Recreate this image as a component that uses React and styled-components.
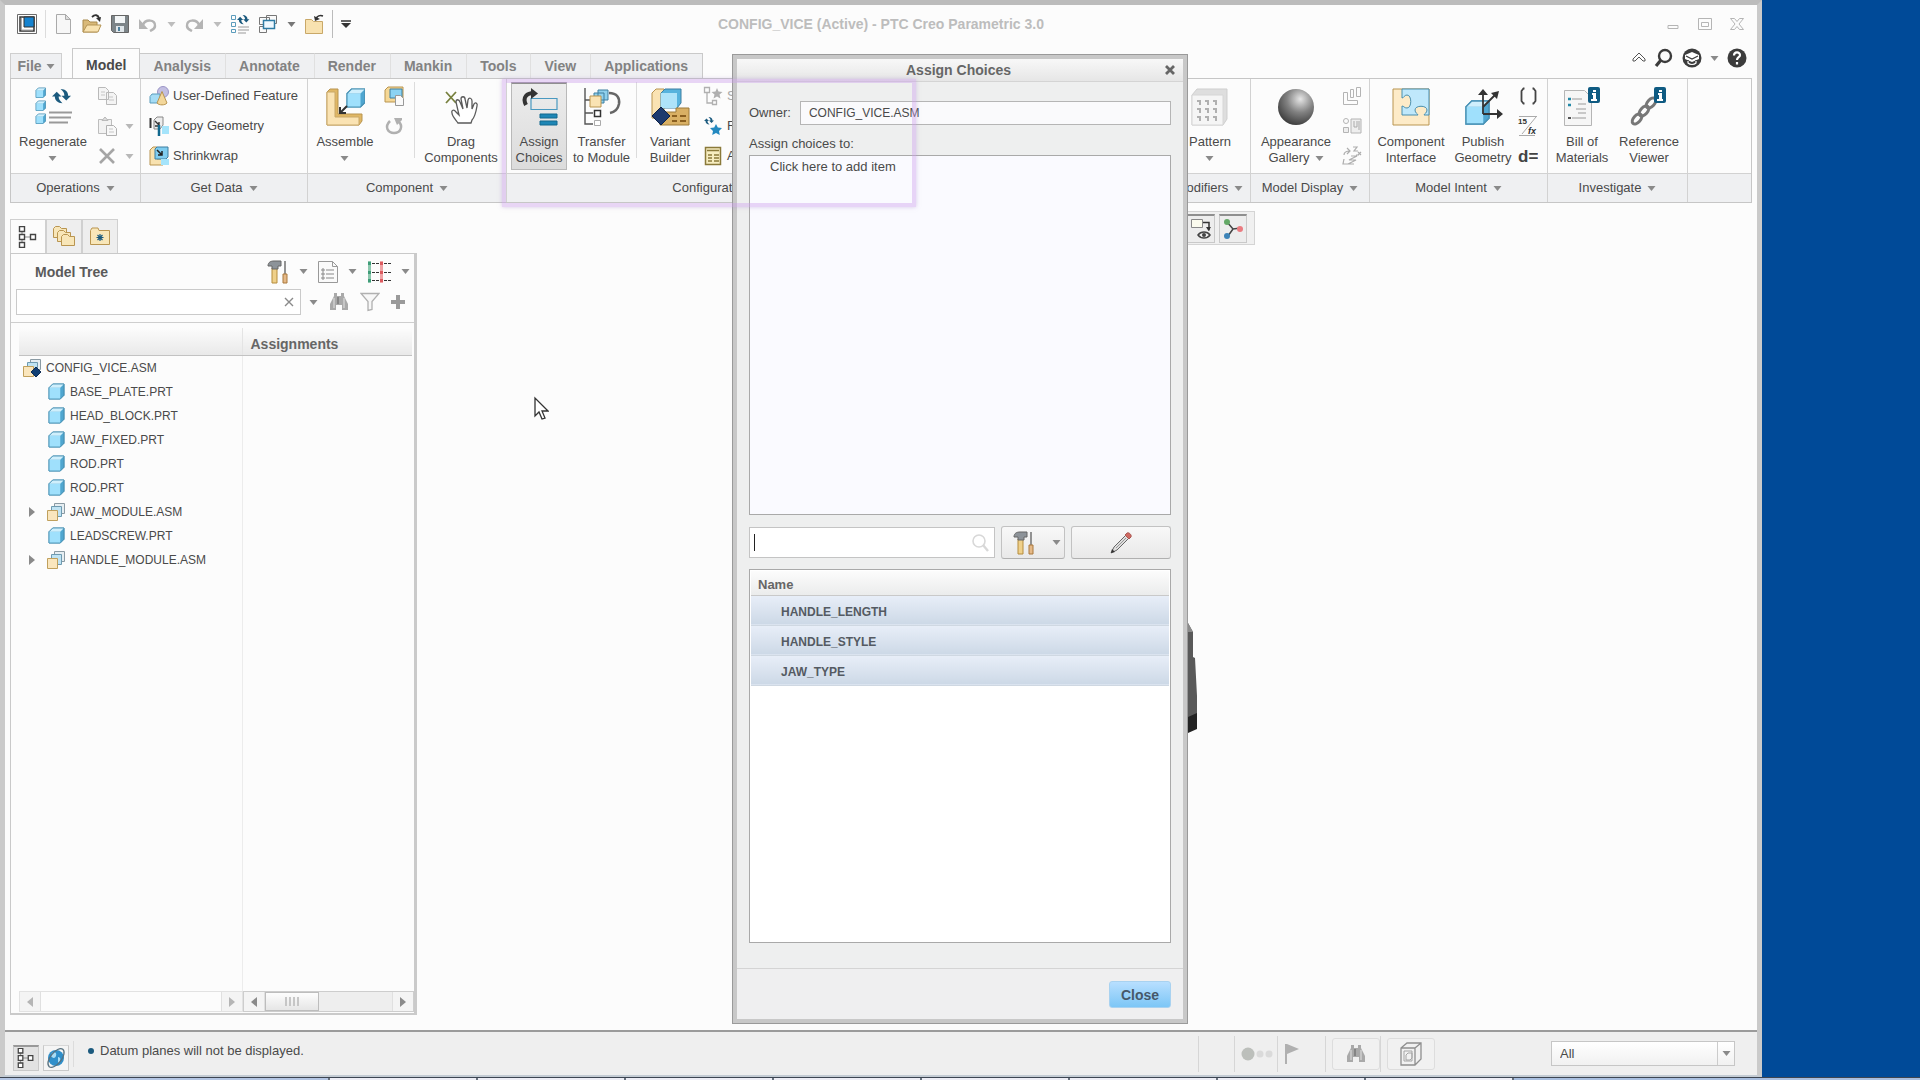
import React from "react";
import styled, { createGlobalStyle } from "styled-components";

const GlobalStyle = createGlobalStyle`
  * {
    box-sizing: border-box;
  }
  body {
    margin: 0;
    background-color: #004a98;
  }
  body, button, input, select, table {
    font-family: "Liberation Sans", Arial, sans-serif;
    font-size: 13px;
    line-height: 16px;
    color: #4a4a4a;
  }
  button {
    padding: 0;
    border: none;
    background: none;
  }
  svg {
    display: block;
    flex: none;
  }
`;

/* ---------- shell ---------- */

const Screen = styled.div`
  min-height: 100vh;
  display: flex;
  flex-direction: column;
  overflow: hidden;
`;

const Desktop = styled.div`
  flex: 1;
  display: flex;
  padding-right: 158px;
  background-color: #004a98;
`;

const Taskbar = styled.footer`
  height: 3px;
  display: flex;
  background-color: #a9bfe0;
  border-top: 1px solid #3d4552;
`;

const TaskSlot = styled.div`
  width: ${({ $wide }) => ($wide ? 330 : 148)}px;
  background-color: ${({ $wide }) => ($wide ? "#b4c6e4" : "#eeeef6")};
  border-right: 2px solid #66707c;
`;

const Window = styled.div`
  position: relative;
  flex: 1;
  min-width: 0;
  display: flex;
  flex-direction: column;
  border: 5px solid #cacaca;
  border-top-color: #bcbcbc;
  border-bottom: 2px solid #c4ccd4;
  background-color: #fcfcfc;
`;

const TitleBar = styled.header`
  height: 38px;
  display: grid;
  grid-template-columns: 1fr auto 1fr;
  align-items: center;
`;

const QuickAccess = styled.div`
  display: flex;
  align-items: center;
  gap: 8px;
  padding-left: 12px;
`;

const IconButton = styled.button`
  min-width: ${({ $narrow }) => ($narrow ? 10 : 20)}px;
  height: 20px;
  display: flex;
  align-items: center;
  justify-content: center;
`;

const Separator = styled.span`
  flex: none;
  width: 1px;
  height: ${({ $height }) => $height || 28}px;
  background-color: ${({ $color }) => $color || "#dcdcdc"};
`;

const WindowTitle = styled.h1`
  margin: 0;
  font-size: 14px;
  font-weight: bold;
  color: #bdbdbd;
`;

const WindowControls = styled.div`
  display: flex;
  justify-content: flex-end;
  gap: 12px;
  padding-right: 10px;
`;

/* ---------- ribbon ---------- */

const TabRow = styled.nav`
  height: 35px;
  display: flex;
  align-items: flex-end;
  padding: 0 5px;
`;

const FileTab = styled.button`
  width: 52px;
  height: 25px;
  margin-right: 10px;
  display: flex;
  align-items: center;
  justify-content: center;
  gap: 4px;
  border: 1px solid #cfcfcf;
  border-bottom: none;
  background-color: #eff0f2;
  font-size: 14px;
  font-weight: bold;
  color: #828282;
`;

const RibbonTab = styled.button`
  height: ${({ $active }) => ($active ? 30 : 25)}px;
  padding: ${({ $active }) => ($active ? "3px 13px 0" : "0 14px 0 13px")};
  border: 1px solid #c9c9c9;
  border-bottom: none;
  border-width: ${({ $active }) => ($active ? "1px 1px 0" : "1px 1px 0 0")};
  border-right-color: ${({ $active, $last }) => ($active || $last ? "#c9c9c9" : "#e0e0e0")};
  background-color: ${({ $active }) => ($active ? "#fcfcfc" : "#eff0f2")};
  font-size: 14px;
  font-weight: bold;
  color: ${({ $active }) => ($active ? "#4a4a4a" : "#828282")};
`;

const HelpTools = styled.div`
  height: 40px;
  margin-left: auto;
  display: flex;
  align-items: center;
  gap: 8px;
  padding-right: 5px;
`;

const Ribbon = styled.section`
  height: 125px;
  margin: 0 5px;
  display: flex;
  border: 1px solid #c6c6c6;
`;

const Group = styled.div`
  flex: ${({ $width }) => ($width ? `0 0 ${$width}px` : "1 1 0")};
  min-width: 0;
  display: flex;
  flex-direction: column;
  border-right: 1px solid #d2d2d2;
  &:last-child {
    border-right: none;
  }
`;

const GroupBody = styled.div`
  flex: 1;
  display: flex;
  align-items: flex-start;
  padding: 3px 4px 0 ${({ $indent }) => $indent || 4}px;
  gap: ${({ $gap }) => $gap || 0}px;
`;

const GroupLabel = styled.button`
  height: 29px;
  display: flex;
  align-items: center;
  justify-content: center;
  gap: 6px;
  padding-left: ${({ $shift }) => $shift || 0}px;
  border-top: 1px solid #d2d2d2;
  background-color: #eff0f2;
  white-space: nowrap;
`;

const BigButton = styled.button`
  flex: 0 0 ${({ $width }) => $width}px;
  height: 88px;
  display: flex;
  flex-direction: column;
  align-items: center;
  padding-top: 4px;
  gap: 7px;
  white-space: nowrap;
  border: 1px solid transparent;
  ${({ $pressed }) =>
    $pressed &&
    `
    border-color: #b9b9b9;
    border-top: 2px solid #8f8f8f;
    padding-top: 3px;
    background: linear-gradient(#ececec, #dcdcdc);
  `}
`;

const ButtonLabel = styled.span`
  display: flex;
  flex-direction: column;
  align-items: center;
  min-width: 0;
`;

const InlineLabel = styled.span`
  display: flex;
  align-items: center;
  gap: 5px;
  height: 16px;
`;

const SmallColumn = styled.div`
  min-width: 24px;
  height: 84px;
  display: flex;
  flex-direction: column;
  align-items: flex-start;
  justify-content: space-between;
  padding-top: 4px;
`;

const SmallRow = styled.div`
  display: flex;
  align-items: center;
  gap: 8px;
`;

const TextButton = styled.button`
  height: 20px;
  display: flex;
  align-items: center;
  gap: 4px;
  white-space: nowrap;
  color: ${({ $dim }) => ($dim ? "#a8a8a8" : "#4a4a4a")};
`;

/* ---------- work area ---------- */

const WorkArea = styled.main`
  flex: 1;
  display: flex;
  padding: 0 0 15px 5px;
`;

const SidePanel = styled.aside`
  width: 407px;
  display: flex;
  flex-direction: column;
  padding-top: 16px;
`;

const PanelTabs = styled.div`
  display: flex;
`;

const PanelTab = styled.button`
  width: 36px;
  height: 34px;
  display: flex;
  align-items: center;
  justify-content: center;
  border: 1px solid #d0d0d0;
  border-bottom: none;
  background-color: ${({ $active }) => ($active ? "#fcfcfc" : "#eeeeee")};
`;

const PanelBody = styled.div`
  flex: 1;
  display: flex;
  flex-direction: column;
  border: 1px solid #c9c9c9;
  border-right: 3px solid #cacaca;
  border-bottom: 2px solid #cacaca;
`;

const PanelHeader = styled.div`
  height: 35px;
  display: flex;
  align-items: center;
  gap: 10px;
  padding: 0 4px 0 24px;
`;

const PanelTitle = styled.h2`
  flex: 1;
  margin: 0;
  font-size: 14px;
  font-weight: bold;
  color: #5a5a5a;
`;

const FilterRow = styled.div`
  height: 34px;
  display: flex;
  align-items: flex-start;
  gap: 11px;
  padding: 0 9px 0 5px;
  border-bottom: 1px solid #cecece;
`;

const FilterGroup = styled.div`
  flex: 1;
  display: flex;
  gap: 7px;
`;

const FilterBox = styled.div`
  flex: 1;
  height: 26px;
  display: flex;
  align-items: center;
  padding-right: 6px;
  border: 1px solid #cacaca;
  background-color: #ffffff;
`;

const BareInput = styled.input`
  flex: 1;
  min-width: 0;
  height: 100%;
  padding: 0 4px;
  border: none;
  outline: none;
  background: transparent;
  caret-color: transparent;
`;

const FilterTool = styled.button`
  height: 26px;
  min-width: ${({ $narrow }) => ($narrow ? 10 : 20)}px;
  display: flex;
  align-items: center;
  justify-content: center;
`;

const TreeArea = styled.div`
  flex: 1;
  margin: 5px 2px 0 8px;
  background: linear-gradient(#ececec, #ececec) 223px 0 / 1px 100% no-repeat;
`;

const TreeTable = styled.table`
  width: 100%;
  table-layout: fixed;
  border-collapse: collapse;
  font-size: 12px;
  th {
    height: 27px;
    padding: 6px 8px 0;
    text-align: left;
    font-size: 14px;
    color: #666666;
    border-bottom: 1px solid #c2c2c2;
    background: linear-gradient(#fcfcfc, #e9e9e9);
  }
  th:first-child {
    width: 223px;
    border-right: 1px solid #e4e4e4;
  }
  td {
    height: 24px;
    padding: 1px 0 0;
  }
`;

const TreeItem = styled.div`
  display: flex;
  align-items: center;
  gap: 4px;
  padding-left: ${({ $root }) => ($root ? 3 : 9)}px;
`;

const Expander = styled.span`
  width: 14px;
  display: flex;
  justify-content: flex-start;
`;

const ItemIcon = styled.span`
  width: 20px;
  display: flex;
  justify-content: center;
`;

const ScrollRow = styled.div`
  height: 21px;
  display: flex;
  margin: 0 0 1px 8px;
`;

const ScrollBar = styled.div`
  flex: ${({ $width }) => ($width ? `0 0 ${$width}px` : "1")};
  display: flex;
  border: 1px solid ${({ $dim }) => ($dim ? "#e2e2e2" : "#cdcdcd")};
  background-color: ${({ $dim }) => ($dim ? "#fcfcfc" : "#eeeeee")};
`;

const ScrollArrow = styled.button`
  width: 20px;
  display: flex;
  align-items: center;
  justify-content: center;
  background-color: #f4f4f4;
`;

const ScrollTrack = styled.div`
  flex: 1;
  border: 1px solid #e0e0e0;
  border-width: 0 1px;
`;

const ScrollThumb = styled.div`
  width: 54px;
  height: 100%;
  display: flex;
  align-items: center;
  justify-content: center;
  gap: 2px;
  border: 1px solid #bdbdbd;
  background: linear-gradient(#fdfdfd, #e6e6e6);
  i {
    width: 2px;
    height: 9px;
    background-color: #c6c6c6;
  }
`;

const Viewport = styled.div`
  flex: 1;
  position: relative;
  display: flex;
  flex-direction: column;
  align-items: center;
  padding-top: 8px;
`;

const ViewToolbar = styled.div`
  width: 336px;
  height: 34px;
  display: flex;
  justify-content: flex-end;
  align-items: center;
  gap: 4px;
  padding: 2px 7px 1px;
  border: 1px solid #d4d4d4;
  background-color: #f0f0f0;
`;

const ViewButton = styled.button`
  width: 28px;
  height: 29px;
  display: flex;
  align-items: center;
  justify-content: center;
  border: 1px solid #c9c9c9;
  border-top: 2px solid #8f8f8f;
  background-color: #ededed;
`;

const ModelPart = styled.svg`
  position: absolute;
  left: 760px;
  top: 420px;
`;

/* ---------- status bar ---------- */

const StatusBar = styled.footer`
  height: 45px;
  display: flex;
  align-items: center;
  padding: 0 22px 0 8px;
  border-top: 2px solid #9b9b9b;
  background-color: #efefef;
`;

const StatusToggle = styled.button`
  width: 26px;
  height: 26px;
  margin: 8px 4px 0 0;
  display: flex;
  align-items: center;
  justify-content: center;
  border: 1px solid #c9c9c9;
  border-top: ${({ $pressed }) => ($pressed ? "2px solid #999999" : "1px solid #d8d8d8")};
  background-color: ${({ $pressed }) => ($pressed ? "#e2e2e2" : "#f5f5f5")};
`;

const Message = styled.p`
  flex: 1;
  margin: 0 0 6px 14px;
  display: flex;
  align-items: center;
  gap: 6px;
  &::before {
    content: "";
    width: 6px;
    height: 6px;
    border-radius: 50%;
    background-color: #1b5a7e;
  }
`;

const StatusCell = styled.div`
  width: ${({ $width }) => $width}px;
  height: 36px;
  display: flex;
  align-items: center;
  gap: 4px;
  padding-left: 6px;
  border-left: 1px solid #d6d6d6;
`;

const StatusButton = styled.button`
  width: 48px;
  height: 32px;
  display: flex;
  align-items: center;
  justify-content: center;
  border: 1px solid #dddddd;
  border-radius: 3px;
  background-color: #f1f1f1;
`;

const SelectWrap = styled.label`
  width: 184px;
  height: 25px;
  margin-left: 116px;
  display: flex;
  align-items: center;
  border: 1px solid #c6c6c6;
  background: linear-gradient(#ffffff, #f1f1f1);
  select {
    flex: 1;
    height: 100%;
    padding: 0 8px;
    border: none;
    outline: none;
    appearance: none;
    background: transparent;
  }
  span {
    width: 17px;
    height: 100%;
    display: flex;
    align-items: center;
    justify-content: center;
    border-left: 1px solid #cccccc;
  }
`;

/* ---------- dialog ---------- */

const Dialog = styled.section`
  position: absolute;
  left: 727px;
  top: 49px;
  width: 456px;
  border: 1px solid #9a9a9a;
  background-color: #c8c8c8;
  padding: 4px;
`;

const DialogTitle = styled.header`
  height: 23px;
  display: grid;
  grid-template-columns: 20px 1fr 20px;
  align-items: center;
  border-bottom: 1px solid #d4d4d4;
  background: linear-gradient(#f8f8f8, #e6e6e6);
  padding-right: 3px;
  h2 {
    margin: 0;
    text-align: center;
    font-size: 14px;
    color: #666666;
  }
`;

const DialogBody = styled.div`
  display: flex;
  flex-direction: column;
  padding: 19px 12px 25px;
  background-color: #eeefef;
`;

const OwnerRow = styled.label`
  display: flex;
  align-items: center;
  gap: 9px;
  input {
    flex: 1;
    min-width: 0;
    height: 24px;
    padding: 0 8px;
    border: 1px solid #b5b5b5;
    outline: none;
    background-color: #fafafc;
    font-size: 12px;
  }
`;

const FieldLabel = styled.span`
  margin: 11px 0 3px;
`;

const ChoiceList = styled.div`
  height: 360px;
  padding: 3px 20px;
  border: 1px solid #a9a9a9;
  background-color: #fafaff;
`;

const SearchRow = styled.div`
  display: flex;
  align-items: center;
  margin: 11px 0 10px;
  gap: 6px;
`;

const SearchBox = styled.div`
  flex: 1;
  height: 31px;
  display: flex;
  align-items: center;
  padding: 0 4px;
  border: 1px solid #c4c4c4;
  background-color: #ffffff;
`;

const TextCaret = styled.span`
  width: 1px;
  height: 17px;
  background-color: #222222;
`;

const ToolButton = styled.button`
  width: ${({ $width }) => $width}px;
  height: 33px;
  display: flex;
  align-items: center;
  justify-content: ${({ $menu }) => ($menu ? "space-between" : "center")};
  padding: 0 3px 0 ${({ $menu }) => ($menu ? 11 : 3)}px;
  border: 1px solid #c2c2c2;
  border-bottom-color: #b0b0b0;
  border-radius: 3px;
  background: linear-gradient(#f8f8f8, #e9e9e9);
`;

const NamePanel = styled.div`
  height: 374px;
  padding: 1px;
  border: 1px solid #a9a9a9;
  background-color: #ffffff;
`;

const NameTable = styled.table`
  width: 100%;
  border-collapse: collapse;
  th {
    height: 24px;
    padding: 4px 7px 0;
    text-align: left;
    color: #666666;
    border-bottom: 1px solid #c9c9c9;
    background: linear-gradient(#fcfcfc, #ebecec);
  }
  td {
    height: 30px;
    padding: 3px 30px 0;
    font-size: 12px;
    font-weight: bold;
    color: #545a62;
    border-bottom: 1px solid #cfd8e2;
    background: linear-gradient(#e8eef8, #ccd8e6);
  }
`;

const DialogFooter = styled.footer`
  display: flex;
  justify-content: flex-end;
  padding: 12px 12px 11px;
  border-top: 1px solid #d4d4d4;
  background-color: #efeff0;
`;

const CloseButton = styled.button`
  width: 62px;
  height: 27px;
  border: 1px solid #a9d2f0;
  border-radius: 3px;
  background: linear-gradient(#b8dfff, #7cc6f6);
  font-size: 14px;
  font-weight: bold;
  color: #46586a;
`;

const Highlight = styled.div`
  position: absolute;
  left: 497px;
  top: 74px;
  width: 414px;
  height: 128px;
  border: 4px solid rgba(206, 160, 236, 0.42);
  box-shadow: 0 0 4px rgba(180, 150, 210, 0.5);
  pointer-events: none;
`;

const Pointer = styled.svg`
  position: absolute;
  left: 528px;
  top: 391px;
`;

/* ---------- icons ---------- */

const Svg = ({ w = 20, h, box, children }) => (
  <svg
    width={w}
    height={h || w}
    viewBox={box || `0 0 ${w} ${h || w}`}
    fill="none"
    stroke="#6b6b6b"
    aria-hidden="true"
  >
    {children}
  </svg>
);

const Down = ({ color = "#8a8a8a" }) => (
  <Svg w={9} h={5}>
    <path d="M.5 0h8l-4 5z" fill={color} stroke="none" />
  </Svg>
);

const Side = ({ left, color = "#8a8a8a", size = 8 }) => (
  <Svg w={size} h={size + 2} box="0 0 8 10">
    <path d={left ? "M7 0v10L1 5z" : "M1 0v10l6-5z"} fill={color} stroke="none" />
  </Svg>
);

const Cube = ({ x = 0, y = 0, s = 10 }) => (
  <g stroke="#4a93b6" strokeWidth=".6" transform={`translate(${x} ${y}) scale(${s / 10})`}>
    <path d="M2.500 0H10v7.500L7.500 10H0V2.500z" fill="#4fa6d0" />
    <path d="M0 2.500h7.500V10H0z" fill="#9fe0fc" stroke="none" />
    <path d="M0 2.500 2.500 0H10L7.500 2.500z" fill="#cfeffc" stroke="none" />
    <path d="M2.500 0H10v7.500L7.500 10H0V2.500z" />
  </g>
);

const RefreshArrows = ({ x = 0, y = 0, s = 1 }) => (
  <g fill="#1b5a7e" stroke="none" transform={`translate(${x} ${y}) scale(${s})`}>
    <path d="M9 0c5 0 8 3 8 7h3l-5 5-5-5h3c0-3-1-4-4-7z" />
    <path d="M11 15c-5 0-8-3-8-7H0l5-5 5 5H7c0 3 1 4 4 7z" />
  </g>
);

const AppIcon = () => (
  <Svg>
    <path d="M.5.5h19v19H.5z" />
    <path d="M3 3h14v14H3z" fill="#fff" stroke="#333" strokeWidth="1.500" />
    <path d="M7 3h10v10H7z" fill="#1583d0" stroke="#333" />
    <path d="M4.500 4v12H16" stroke="#aaa" />
  </Svg>
);

const NewIcon = () => (
  <Svg>
    <path d="M2.500.5h9l5 5v14h-14z" fill="#f7f7f7" stroke="#aaa" />
    <path d="M11.500.5v5h5z" fill="#ddd" stroke="#aaa" />
  </Svg>
);

const OpenIcon = () => (
  <Svg>
    <path d="M1 18V6h5l2 2h7v10z" fill="#d9b979" stroke="#a98a4c" />
    <path d="m1 18 4-7h14l-3 7z" fill="#f8e2b0" stroke="#b59556" />
    <path d="M10 3c3-3 6-2 7 1" stroke="#333" strokeWidth="1.800" />
    <path d="m14 4 5-1-1 5z" fill="#333" stroke="none" />
  </Svg>
);

const SaveIcon = () => (
  <Svg>
    <path d="M1.500 1.500h17v17h-15l-2-2z" fill="#7c8488" stroke="#666" />
    <path d="M5 2h10v7H5z" fill="#f3f6f7" stroke="none" />
    <path d="M6 12h8v6H6z" fill="#dfe6ea" stroke="none" />
    <path d="M8 13h2v4H8z" fill="#4d7f9c" stroke="none" />
  </Svg>
);

const UndoIcon = ({ flip }) => (
  <Svg>
    <g transform={flip ? "translate(20 0) scale(-1 1)" : undefined}>
      <path d="M5 11c2-6 13-6 12 1 0 3-3 4-5 5" stroke="#b4b4b4" strokeWidth="2.500" />
      <path d="M1 5v10h9z" fill="#b4b4b4" stroke="none" />
    </g>
  </Svg>
);

const RedoIcon = () => <UndoIcon flip />;

const RegenIcon = () => (
  <Svg>
    <path d="M1.500 1.500h4v4h-4zM1.500 8.500h4v4h-4zM1.500 15.500h4v3h-4z" stroke="#5b9cbc" />
    <RefreshArrows x={7} y={1} s={0.62} />
    <path d="M8 13h11M8 16h11M8 19h8" stroke="#999" strokeWidth="1.200" />
  </Svg>
);

const WindowsIcon = () => (
  <Svg>
    <path d="M8.500 1.500h10v8h-10zM1.500 3.500h10v7h-10zM1.500 12.500h7v6h-7z" fill="#fafafa" stroke="#777" />
    <path d="M5.500 6.500h11v8h-11z" fill="#eef8ff" stroke="#2d7ba4" strokeWidth="1.500" />
  </Svg>
);

const CloseFolderIcon = () => (
  <Svg>
    <path d="M1.500 5.500h6l2 2h9v12h-17z" fill="#f8e2b0" stroke="#c9a868" />
    <path d="M12 5c1-3 4-4 7-3" stroke="#333" strokeWidth="1.600" />
    <path d="m10 2 1 5 5-2z" fill="#333" stroke="none" />
  </Svg>
);

const MoreIcon = () => (
  <Svg w={10} h={8}>
    <path d="M0 1h10" stroke="#333" strokeWidth="1.500" />
    <path d="M0 3h10L5 8z" fill="#333" stroke="none" />
  </Svg>
);

const RegenerateBig = () => (
  <Svg w={40}>
    <Cube x={3} y={1} s={9.5} />
    <Cube x={3} y={14} s={9.5} />
    <Cube x={3} y={27} s={9.5} />
    <RefreshArrows x={19} y={2} s={0.95} />
    <path d="M16 25.500h23M16 30.500h22M16 35.500h19" stroke="#999" strokeWidth="2" />
  </Svg>
);

const CopyIcon = () => (
  <Svg>
    <path d="M1.500 1.500h7l3 3v9h-10zM9.500 6.500h7l3 3v9h-10z" fill="#f4f4f4" stroke="#b9b9b9" />
    <path d="M4 6h4M4 9h4M12 11h4M12 14h5" stroke="#c6c6c6" />
  </Svg>
);

const PasteIcon = () => (
  <Svg>
    <path d="M1.500 3.500h13v14h-13z" fill="#f2f2f2" stroke="#bdbdbd" />
    <path d="M5 4.500 8 1l3 3.500z" fill="#ddd" stroke="#b9b9b9" />
    <path d="M9.500 9.500h7l3 3v7h-10z" fill="#f8f8f8" stroke="#b0b0b0" />
    <path d="M12 13h4M12 16h5" stroke="#c6c6c6" />
  </Svg>
);

const DeleteIcon = () => (
  <Svg>
    <path d="m3 3 14 14M17 3 3 17" stroke="#a5a5a5" strokeWidth="2.600" />
  </Svg>
);

const UdfIcon = () => (
  <Svg>
    <circle cx="14" cy="6" r="5.500" fill="#c3bfe2" stroke="#9a94c6" />
    <path d="M1 10.500 3 8h8v6l-2 3H1z" fill="#a5dcf5" stroke="#5b9cbc" />
    <path d="M13 5.500 18 17c-2 2.500-8 2.500-10 0z" fill="#f3d79b" stroke="#b99550" />
  </Svg>
);

const CopyGeomIcon = () => (
  <Svg>
    <path d="M1.500 2v10" stroke="#333" strokeWidth="2" />
    <path d="M5 4 8 1h6v8l-3 4H5z" fill="#ededed" stroke="#888" />
    <path d="m6 5 4 4M10 6v4H6" stroke="#333" strokeWidth="1.400" />
    <path d="M10 9v11" stroke="#12688e" strokeWidth="2.500" />
    <path d="M13 10h7v8h-7z" fill="#a5e4fb" stroke="none" />
  </Svg>
);

const ShrinkIcon = () => (
  <Svg>
    <path d="M1 4 4 1h4v12h9l-3 6H1z" fill="#f8e2b0" stroke="#b99550" />
    <path d="M6 3 8 1h11v10l-2 2H6z" fill="#7fcdf0" stroke="#3f7fa0" />
    <path d="m8 4 5 5M13 5v4H9" stroke="#222" strokeWidth="1.500" />
    <path d="M12 13h8v6h-8z" fill="#a5e4fb" stroke="none" />
  </Svg>
);

const AssembleBig = () => (
  <Svg w={40}>
    <path d="M2 5 5 2h8v25h24v7l-3 4H2z" fill="#e0b765" stroke="#b99550" />
    <path d="M2 5h8v25h24v8H2z" fill="#fae3b3" stroke="#c9a868" />
    <Cube x={22} y={2} s={18} />
    <path d="m22 19-6 6M15 20v6h6" stroke="#333" strokeWidth="2" />
  </Svg>
);

const PackageIcon = () => (
  <Svg>
    <path d="M1 4 4 1h15v11l-3 4H1z" fill="#f5d795" stroke="#b99550" />
    <path d="M6 3h12v9H6z" fill="#8bd3f3" stroke="#3f7fa0" />
    <path d="M11.500 9.500h5l3 3v7h-8z" fill="#fafafa" stroke="#999" />
  </Svg>
);

const RepeatIcon = () => (
  <Svg>
    <path d="M6 5c-6 6-2 12 4 12 7 0 9-7 5-11" stroke="#b0b0b0" strokeWidth="2.500" />
    <path d="M10 2h8v2l-5 5z" fill="#b0b0b0" stroke="none" />
  </Svg>
);

const HandBig = () => (
  <Svg w={40}>
    <path d="m5 5 10 11M15 5 5 16" stroke="#77803e" strokeWidth="1.800" />
    <path
      d="M17 36c-3-4-6-7-6-10-1-3 2-4 4-1l3 3-3-13c0-3 3-3 4 0l3 7-2-10c0-3 4-3 4 0l2 9 1-8c1-3 4-2 4 1v8l2-5c1-2 4-1 3 2-1 6-2 11-5 14l-1 3z"
      fill="#fff"
      stroke="#5a5a5a"
      strokeWidth="1.300"
    />
  </Svg>
);

const AssignBig = () => (
  <Svg w={40}>
    <path d="M12 11.500h26v11H12z" stroke="#4a99c0" strokeWidth="1.200" />
    <path d="M7 18C3 10 8 6 15 6" stroke="#333" strokeWidth="4" />
    <path d="M12 1v11l7-5.500z" fill="#333" stroke="none" />
    <path d="M21 27h17v4H21zM21 34h17v4H21z" fill="#1e86b5" stroke="#12688e" />
  </Svg>
);

const TransferBig = () => (
  <Svg w={40}>
    <path d="M3 1v36h8M3 13h6M3 26h8" stroke="#555" strokeWidth="1.400" />
    <path d="M16 3h10v10H16zM12 6h10v10H12z" fill="#8fd0ec" stroke="#3f7fa0" />
    <path d="M8 9h11v11H8z" fill="#fae3b3" stroke="#b99550" />
    <path d="M12.500 23.500h6v6h-6z" fill="#fff" stroke="#333" strokeWidth="1.500" />
    <path d="M12.500 33.500h6v5h-6z" fill="#fff" stroke="#aaa" />
    <path d="M27 6c8 0 11 5 10 11-1 5-4 8-9 9" stroke="#666" strokeWidth="2.500" />
  </Svg>
);

const VariantBig = () => (
  <Svg w={40}>
    <path d="M2 6 6 2h8v30l-12-1z" fill="#fae3b3" stroke="#b99550" />
    <path d="M11 6 15 2h16v14l-4 5H11z" fill="#57b3dd" stroke="#3f7fa0" />
    <path d="M11 6h16v15H11z" fill="#aee3f9" stroke="none" />
    <path d="M10 38V25h16v-4h13v17z" fill="#d9b064" stroke="#9c7a3a" />
    <path d="M22 29h5M30 29h6M22 34h5M30 34h6" stroke="#8a5f20" strokeWidth="2" />
    <path d="m11 20 9 9-9 9-9-9z" fill="#1d3a6e" stroke="#0e2248" />
  </Svg>
);

const TreeStarIcon = () => (
  <Svg>
    <path d="M1.500 1.500h5v5h-5zM4 7v10h5M9.500 14.500h4v4h-4z" stroke="#b0b0b0" strokeWidth="1.300" />
    <path d="m14 2 1.500 3.500 4 .5-3 2.500 1 4-3.500-2-3.500 2 1-4-3-2.500 4-.5z" fill="#b0b0b0" stroke="none" />
  </Svg>
);

const StarRefreshIcon = () => (
  <Svg>
    <RefreshArrows x={1} y={1} s={0.5} />
    <path d="m13 8 1.800 3.500 4.200.5-3 3 .8 4-3.800-2-3.800 2 .8-4-3-3 4.200-.5z" fill="#2389c0" stroke="none" />
  </Svg>
);

const SheetIcon = () => (
  <Svg>
    <path d="M2.500 1.500h15v17h-15z" fill="#f6edc0" stroke="#8a7a3a" strokeWidth="1.500" />
    <path d="M4 4.500h12M5 9h4M11 9h5M5 12h4M11 12h5M5 15h4M11 15h5" stroke="#8a7a3a" strokeWidth="1.400" />
  </Svg>
);

const PatternBig = () => (
  <Svg w={40}>
    <path d="m2 8 5-6h30v30l-4 6H2z" fill="#dedede" stroke="#cfcfcf" />
    <path d="M2 8h31v30H2z" fill="#f5f5f5" stroke="#d6d6d6" />
    {[14, 22, 30].map((y) => (
      <path key={y} d={`M7 ${y}h3v4M15 ${y}h3v4M23 ${y}h3v4`} stroke="#b0b0b0" strokeWidth="2" />
    ))}
  </Svg>
);

const SphereBig = () => (
  <Svg w={40}>
    <defs>
      <radialGradient id="ball" cx=".62" cy=".28" r=".75">
        <stop offset="0" stopColor="#e6e6e6" />
        <stop offset=".5" stopColor="#828282" />
        <stop offset="1" stopColor="#3c3c3c" />
      </radialGradient>
    </defs>
    <circle cx="20" cy="20" r="18" fill="url(#ball)" stroke="none" />
  </Svg>
);

const DisplayIcon = () => (
  <Svg>
    <path d="M1.500 6.500v12h14v-4h-10v-8zM8.500 3.500h3v8h-3zM14.500 1.500h4v9h-4z" stroke="#b4b4b4" />
  </Svg>
);

const PanelsIcon = () => (
  <Svg>
    <circle cx="4" cy="5" r="2.500" stroke="#b4b4b4" />
    <path d="M1.500 11.500h5v5h-5zM9 3h10v14H9z" fill="#eee" stroke="#b4b4b4" />
    <path d="M12 5v6h3V5M17 5v9" stroke="#aaa" />
  </Svg>
);

const FlowIcon = () => (
  <Svg>
    <path
      d="M2 9c0-3 2-4 6-4M5 2l3 3-3 3M9 10h6l-8 4h7l-8 4h6M2 13l-1 5h5M11 1h4l-3 4h4M16 6l3 3M19 6l-3 3M14 9h3"
      stroke="#adadad"
      strokeWidth="1.200"
    />
  </Svg>
);

const PuzzleBig = () => (
  <Svg w={40}>
    <path d="M2 2h36v36H2z" fill="#fdebc8" stroke="#b99550" />
    <path
      d="M11 2h27v26h-5c0-1 3-2 3-5 0-5-12-5-12 0 0 3 3 4 3 5H11v-9c2 0 2 2 5 2 5 0 5-13 0-13-3 0-3 3-5 3z"
      fill="#bfe8fb"
      stroke="#4a8fae"
    />
  </Svg>
);

const PublishBig = () => (
  <Svg w={40}>
    <Cube x={3} y={14} s={23} />
    <path d="M20 27V5M20 27h16M20 20 33 7" stroke="#333" strokeWidth="1.800" />
    <path d="m15 8 5-6 5 6zM34 22l6 5-6 5zM28 6l8-2-2 8z" fill="#333" stroke="none" />
  </Svg>
);

const BracketsIcon = () => (
  <Svg>
    <path d="M6.500 2.500h-1L3.500 5v10l2 2.500h1M14.500 2.500h1l2 2.500v10l-2 2.500h-1" stroke="#444" strokeWidth="1.800" />
  </Svg>
);

const RelationIcon = () => (
  <Svg>
    <path d="M1 .5h18M1 19.500h16M4 18 18 1" stroke="#aaa" />
    <g fill="#333" stroke="none" fontFamily="Liberation Sans" fontWeight="bold">
      <text x="0" y="8" fontSize="8">15</text>
      <text x="10" y="18" fontSize="9" fontStyle="italic">fx</text>
    </g>
  </Svg>
);

const ParamIcon = () => (
  <Svg>
    <text x="0" y="16" fontSize="17" fontFamily="Liberation Sans" fontWeight="bold" fill="#444" stroke="none">
      d=
    </text>
  </Svg>
);

const InfoBadge = ({ x }) => (
  <g transform={`translate(${x} 0)`} stroke="none">
    <rect width="12" height="16" rx="2" fill="#0f5b82" />
    <path d="M5 3h3v2H5zM4 6h4v6h1v2H3v-2h2V8H4z" fill="#fff" />
  </g>
);

const BomBig = () => (
  <Svg w={40}>
    <path d="M2.500 3.500h20l7 7v28h-27z" fill="#f6f6f6" stroke="#b5b5b5" />
    <path d="M10 12h10M16 17h8M14 22h10M16 26h8M10 31h14" stroke="#999" strokeWidth="1.200" />
    <path d="M6 12h3M6 18h3" stroke="#2389a8" strokeWidth="2.500" />
    <path d="M6 31h3" stroke="#555" strokeWidth="2" />
    <InfoBadge x={26} />
  </Svg>
);

const ChainBig = () => (
  <Svg w={40}>
    <g stroke="#777" strokeWidth="3">
      <ellipse cx="8" cy="32" rx="6" ry="3.500" transform="rotate(-48 8 32)" />
      <ellipse cx="15" cy="24" rx="6" ry="3.500" transform="rotate(-48 15 24)" />
      <ellipse cx="22" cy="16" rx="6" ry="3.500" transform="rotate(-48 22 16)" />
    </g>
    <InfoBadge x={25} />
  </Svg>
);

const TreeIcon = ({ size = 22 }) => (
  <Svg w={size} box="0 0 22 22">
    <path d="M5 5v12M7 11h7" stroke="#888" />
    <path d="M2.500.5h5v5h-5zM2.500 8.500h5v5h-5zM2.500 16.500h5v5h-5zM13.500 8.500h5v5h-5z" fill="#fff" stroke="#444" strokeWidth="1.400" />
  </Svg>
);

const FoldersIcon = () => (
  <Svg w={24}>
    {[0, 4, 8].map((d) => (
      <path
        key={d}
        d={`M${d + 1.5} ${d + 3.5}l2-2h4l2 2h5v9h-13z`}
        fill="#f8e6b8"
        stroke="#b99550"
      />
    ))}
  </Svg>
);

const FavoritesIcon = () => (
  <Svg w={22}>
    <path d="M1.500 4.500 3 2h6l1 2.500h10.500v14h-19z" fill="#f8e6b8" stroke="#b99550" />
    <path d="M11 8v7M7.500 11.500h7M8.500 9l5 5M13.500 9l-5 5" stroke="#1b5a7e" strokeWidth="1.200" />
  </Svg>
);

const HammerIcon = () => (
  <Svg w={22} h={24}>
    <path d="M5 8h5v15H5z" fill="#efd08a" stroke="#b58c3c" />
    <path d="M1 6c0-4 3-5 6-5h7v5h-3v3H5V6z" fill="#8d9399" stroke="#666" />
    <path d="M18 1v13" stroke="#888" strokeWidth="1.800" />
    <path d="M16 14h4v9h-4z" fill="#e5b987" stroke="#a9783c" />
  </Svg>
);

const ListDocIcon = () => (
  <Svg w={20} h={24}>
    <path d="M.5 1.500h14l5 5v16H.5z" fill="#fafafa" stroke="#999" />
    <path d="M14.500 1.500v5h5" stroke="#999" />
    <path d="M8 10h8M8 14h8M8 18h8" stroke="#888" />
    <path d="M4 9h2v2H4zM4 13h2v2H4zM4 17h2v2H4z" stroke="#888" />
  </Svg>
);

const ColumnsIcon = () => (
  <Svg w={24}>
    <path d="M2.500 1v22" stroke="#8cc7ad" strokeWidth="3" />
    <path d="M14.500 1v22" stroke="#f0a3a6" strokeWidth="3" />
    <path d="M5 3.500h19M5 12.500h19M5 20.500h19" stroke="#333" strokeDasharray="3 1" />
    <path d="M1 2h3v3H1zM1 11h3v3H1zM1 19h3v3H1z" fill="#3f9c78" stroke="none" />
    <path d="M13 2h3v3h-3zM13 11h3v3h-3zM13 19h3v3h-3z" fill="#dc5b60" stroke="none" />
  </Svg>
);

const ClearIcon = () => (
  <Svg w={10}>
    <path d="m1 1 8 8M9 1 1 9" stroke="#8a8a8a" strokeWidth="1.400" />
  </Svg>
);

const BinocularsIcon = () => (
  <Svg>
    <path d="M5 1h3v3h4V1h3v3l4 8v6h-6v-5H7v5H1v-6l4-8z" fill="#a9a9a9" stroke="none" />
    <path d="M5 6v10M15 6v10" stroke="#c6c6c6" strokeWidth="2" />
    <path d="M9 5v7" stroke="#858585" strokeWidth="2" />
  </Svg>
);

const FunnelIcon = () => (
  <Svg>
    <path d="M1 1.500h18l-7 8v8l-4 1v-9z" fill="#f7f7f7" stroke="#b0b0b0" strokeWidth="1.300" />
  </Svg>
);

const PlusIcon = () => (
  <Svg w={14}>
    <path d="M7 0v14M0 7h14" stroke="#9a9a9a" strokeWidth="4" />
  </Svg>
);

const PartIcon = () => (
  <Svg w={17}>
    <Cube x={1} y={1} s={15} />
  </Svg>
);

const AssemblyIcon = ({ root }) => (
  <Svg w={20}>
    <path d="M8.500 1.500h10v10h-10z" fill="#e6eef2" stroke="#8a9aa3" />
    <path d="M5.500 4.500h10v10h-10z" fill="#bfe3f3" stroke="#6e9ab0" />
    <path d="M1.500 8.500h10v10h-10z" fill="#fae6bd" stroke="#c0a05c" />
    {root && <path d="m14 9 5 5-5 5-5-5z" fill="#123f73" stroke="#0e2c54" />}
  </Svg>
);

const AnnotationIcon = () => (
  <Svg w={22} h={24}>
    <path d="M1.500 2.500h11v8h-11z" fill="#fbfbee" stroke="#888" />
    <path d="M13 5.500h6v8" stroke="#333" strokeWidth="1.500" />
    <path d="m16 10 2.500 4 2.500-4z" fill="#333" stroke="none" />
    <path d="M8 18c3-4 9-4 12 0-3 4-9 4-12 0z" stroke="#444" strokeWidth="1.500" />
    <circle cx="14" cy="18" r="2" fill="#444" stroke="none" />
  </Svg>
);

const SpinCenterIcon = () => (
  <Svg w={22}>
    <path d="m5 4 6 7 8-1M11 11l-5 7" stroke="#444" strokeWidth="1.500" />
    <circle cx="5" cy="4" r="3" fill="#63a866" stroke="none" />
    <circle cx="18" cy="11" r="3" fill="#ea7b80" stroke="none" />
    <circle cx="5" cy="18" r="3" fill="#3d84b8" stroke="none" />
  </Svg>
);

const GlobeIcon = () => (
  <Svg w={22}>
    <circle cx="11" cy="11" r="8" fill="#2f8fca" stroke="none" />
    <path d="M7 6c3-2 5 0 4 3s-4 2-5 0zM13 10c3 0 3 4 0 6z" fill="#a9dcf5" stroke="none" />
    <ellipse cx="11" cy="11" rx="11" ry="5.500" transform="rotate(-52 11 11)" stroke="#57717f" strokeWidth="1.300" />
  </Svg>
);

const SearchIcon = ({ color = "#3c3c3c", flip, w = 2.4 }) => (
  <Svg>
    <g transform={flip ? "translate(20 0) scale(-1 1)" : undefined}>
      <circle cx="11" cy="8" r="6" stroke={color} strokeWidth={w} />
      <path d="m7 12-5 6" stroke={color} strokeWidth={w + 0.8} />
    </g>
  </Svg>
);

const LearnIcon = () => (
  <Svg>
    <circle cx="10" cy="10" r="9.500" fill="#3c3c3c" stroke="none" />
    <path d="m3 7 7-3 7 3v4l-7 3-7-3z" fill="#fff" stroke="none" />
    <path d="m4 8 6 3 6-3M6 12v3c2 1 6 1 8 0v-3" stroke="#3c3c3c" strokeWidth="1.200" />
    <path d="M6 13v2c2 2 6 2 8 0v-2" stroke="#fff" strokeWidth="1.200" />
  </Svg>
);

const HelpIcon = () => (
  <Svg>
    <circle cx="10" cy="10" r="9.500" fill="#3c3c3c" stroke="none" />
    <path d="M7 7.500c0-4 6-4 6-.5 0 2.500-3 2-3 5M10 14v2.500" stroke="#fff" strokeWidth="2.200" />
  </Svg>
);

const CollapseIcon = () => (
  <Svg w={14} h={12}>
    <path d="m1 7 6-6 6 6v2h-2L7 5 3 9H1z" fill="#fff" stroke="#555" />
  </Svg>
);

const PencilIcon = () => (
  <Svg w={24}>
    <path d="m2 22 3-6L17 4l3 3L8 19z" fill="#dedede" stroke="#666" />
    <path d="m2 22 1-4 3 3z" fill="#333" stroke="none" />
    <path d="m16 4 2-2c2-1 5 2 4 4l-2 2z" fill="#cf6a63" stroke="#a95853" />
    <path d="M7 17 17 7" stroke="#999" />
  </Svg>
);

const FlagIcon = () => (
  <Svg w={16} h={22}>
    <path d="M2 1v20" stroke="#b0b0b0" strokeWidth="2" />
    <path d="m3 1 12 5-12 5z" fill="#b0b0b0" stroke="none" />
  </Svg>
);

const DotsIcon = () => (
  <Svg w={32} h={16}>
    <g stroke="none" fill="#dadada">
      <circle cx="7" cy="8" r="6.500" fill="#bcbfbb" />
      <circle cx="19" cy="8" r="3.500" />
      <circle cx="28" cy="8" r="3.500" />
    </g>
  </Svg>
);

const BoxIcon = () => (
  <Svg w={22} h={24}>
    <path d="m1 6 6-5h14v16l-6 6H1zM1 6h14v17M15 6l6-5" stroke="#8f8f8f" strokeWidth="1.300" />
    <path d="M4 9h8v10H4zM6 13l2-2h4v5l-2 2H6z" stroke="#a5a5a5" />
  </Svg>
);

/* ---------- data ---------- */

const tabs = ["Model", "Analysis", "Annotate", "Render", "Mankin", "Tools", "View", "Applications"];

const treeItems = [
  { name: "CONFIG_VICE.ASM", kind: "root" },
  { name: "BASE_PLATE.PRT", kind: "part" },
  { name: "HEAD_BLOCK.PRT", kind: "part" },
  { name: "JAW_FIXED.PRT", kind: "part" },
  { name: "ROD.PRT", kind: "part" },
  { name: "ROD.PRT", kind: "part" },
  { name: "JAW_MODULE.ASM", kind: "asm" },
  { name: "LEADSCREW.PRT", kind: "part" },
  { name: "HANDLE_MODULE.ASM", kind: "asm" },
];

const choices = ["HANDLE_LENGTH", "HANDLE_STYLE", "JAW_TYPE"];

/* ---------- parts ---------- */

const Big = ({ icon: Icon, lines, menu, inlineMenu, ...rest }) => (
  <BigButton {...rest}>
    <Icon />
    <ButtonLabel>
      {lines.map((line, i) => (
        <InlineLabel key={line}>
          {line}
          {inlineMenu && i === lines.length - 1 && <Down />}
        </InlineLabel>
      ))}
      {menu && (
        <InlineLabel>
          <Down />
        </InlineLabel>
      )}
    </ButtonLabel>
  </BigButton>
);

const RibbonGroup = ({ label, width, gap, indent, shift, children }) => (
  <Group $width={width}>
    <GroupBody $gap={gap} $indent={indent}>{children}</GroupBody>
    <GroupLabel $shift={shift}>
      {label}
      {label && <Down />}
    </GroupLabel>
  </Group>
);

const Small = ({ icon: Icon, label }) => (
  <IconButton aria-label={label}>
    <Icon />
  </IconButton>
);

const RibbonPanel = () => (
  <Ribbon>
    <RibbonGroup label="Operations" width={130} gap={6}>
      <Big icon={RegenerateBig} lines={["Regenerate"]} menu $width={76} />
      <SmallColumn>
        <Small icon={CopyIcon} label="Copy" />
        <SmallRow>
          <Small icon={PasteIcon} label="Paste" />
          <Down color="#b8b8b8" />
        </SmallRow>
        <SmallRow>
          <Small icon={DeleteIcon} label="Delete" />
          <Down color="#b8b8b8" />
        </SmallRow>
      </SmallColumn>
    </RibbonGroup>
    <RibbonGroup label="Get Data" width={167} indent={8}>
      <SmallColumn>
        <TextButton><UdfIcon />User-Defined Feature</TextButton>
        <TextButton><CopyGeomIcon />Copy Geometry</TextButton>
        <TextButton><ShrinkIcon />Shrinkwrap</TextButton>
      </SmallColumn>
    </RibbonGroup>
    <RibbonGroup label="Component" width={199} gap={6}>
      <Big icon={AssembleBig} lines={["Assemble"]} menu $width={66} />
      <SmallColumn>
        <Small icon={PackageIcon} label="Package" />
        <Small icon={RepeatIcon} label="Repeat" />
        <IconButton as="span" />
      </SmallColumn>
      <Separator $height={76} />
      <Big icon={HandBig} lines={["Drag", "Components"]} $width={80} />
    </RibbonGroup>
    <RibbonGroup label="Configuration" gap={5} shift={30}>
      <Big icon={AssignBig} lines={["Assign", "Choices"]} $width={56} $pressed />
      <Big icon={TransferBig} lines={["Transfer", "to Module"]} $width={58} />
      <Separator $height={76} />
      <Big icon={VariantBig} lines={["Variant", "Builder"]} $width={56} />
      <SmallColumn>
        <TextButton $dim><TreeStarIcon />S</TextButton>
        <TextButton><StarRefreshIcon />R</TextButton>
        <TextButton><SheetIcon />A</TextButton>
      </SmallColumn>
    </RibbonGroup>
    <Group $width={268}>
      <GroupBody />
      <GroupLabel />
    </Group>
    <RibbonGroup label="Modifiers" width={82}>
      <Big icon={PatternBig} lines={["Pattern"]} menu $width={74} />
    </RibbonGroup>
    <RibbonGroup label="Model Display" width={119} gap={5}>
      <Big icon={SphereBig} lines={["Appearance", "Gallery"]} inlineMenu $width={82} />
      <SmallColumn>
        <Small icon={DisplayIcon} label="Display" />
        <Small icon={PanelsIcon} label="Panels" />
        <Small icon={FlowIcon} label="Flow" />
      </SmallColumn>
    </RibbonGroup>
    <RibbonGroup label="Model Intent" width={178} gap={4}>
      <Big icon={PuzzleBig} lines={["Component", "Interface"]} $width={74} />
      <Big icon={PublishBig} lines={["Publish", "Geometry"]} $width={62} />
      <SmallColumn>
        <Small icon={BracketsIcon} label="Parameters" />
        <Small icon={RelationIcon} label="Relations" />
        <Small icon={ParamIcon} label="Switch dimensions" />
      </SmallColumn>
    </RibbonGroup>
    <RibbonGroup label="Investigate" width={140} gap={5}>
      <Big icon={BomBig} lines={["Bill of", "Materials"]} $width={60} />
      <Big icon={ChainBig} lines={["Reference", "Viewer"]} $width={64} />
    </RibbonGroup>
    <Group $width={63}>
      <GroupBody />
      <GroupLabel />
    </Group>
  </Ribbon>
);

const ModelTree = () => (
  <SidePanel>
    <PanelTabs>
      <PanelTab $active aria-label="Model tree"><TreeIcon /></PanelTab>
      <PanelTab aria-label="Folders"><FoldersIcon /></PanelTab>
      <PanelTab aria-label="Favorites"><FavoritesIcon /></PanelTab>
    </PanelTabs>
    <PanelBody>
      <PanelHeader>
        <PanelTitle>Model Tree</PanelTitle>
        <HammerIcon />
        <Down />
        <ListDocIcon />
        <Down />
        <ColumnsIcon />
        <Down />
      </PanelHeader>
      <FilterRow>
        <FilterGroup>
          <FilterBox>
            <BareInput aria-label="Search model tree" />
            <ClearIcon />
          </FilterBox>
          <FilterTool $narrow aria-label="Search options"><Down /></FilterTool>
        </FilterGroup>
        <FilterTool aria-label="Find"><BinocularsIcon /></FilterTool>
        <FilterTool aria-label="Filter"><FunnelIcon /></FilterTool>
        <FilterTool $narrow aria-label="Add"><PlusIcon /></FilterTool>
      </FilterRow>
      <TreeArea>
        <TreeTable>
          <thead>
            <tr>
              <th aria-label="Component" />
              <th>Assignments</th>
            </tr>
          </thead>
          <tbody>
            {treeItems.map(({ name, kind }, i) => (
              <tr key={i}>
                <td>
                  <TreeItem $root={kind === "root"}>
                    {kind !== "root" && <Expander>{kind === "asm" && <Side />}</Expander>}
                    <ItemIcon>
                      {kind === "part" ? <PartIcon /> : <AssemblyIcon root={kind === "root"} />}
                    </ItemIcon>
                    {name}
                  </TreeItem>
                </td>
                <td />
              </tr>
            ))}
          </tbody>
        </TreeTable>
      </TreeArea>
      <ScrollRow>
        <ScrollBar $width={224} $dim>
          <ScrollArrow aria-label="Scroll left"><Side left color="#b5b5b5" /></ScrollArrow>
          <ScrollTrack />
          <ScrollArrow aria-label="Scroll right"><Side color="#b5b5b5" /></ScrollArrow>
        </ScrollBar>
        <ScrollBar>
          <ScrollArrow aria-label="Scroll left"><Side left /></ScrollArrow>
          <ScrollTrack>
            <ScrollThumb><i /><i /><i /><i /></ScrollThumb>
          </ScrollTrack>
          <ScrollArrow aria-label="Scroll right"><Side /></ScrollArrow>
        </ScrollBar>
      </ScrollRow>
    </PanelBody>
  </SidePanel>
);

const AssignChoices = () => (
  <Dialog role="dialog" aria-label="Assign Choices">
    <DialogTitle>
      <span />
      <h2>Assign Choices</h2>
      <IconButton aria-label="Close dialog">
        <Svg w={10}>
          <path d="m1 1 8 8M9 1 1 9" stroke="#666" strokeWidth="2.800" />
        </Svg>
      </IconButton>
    </DialogTitle>
    <DialogBody>
      <OwnerRow>
        Owner:
        <input defaultValue="CONFIG_VICE.ASM" readOnly />
      </OwnerRow>
      <FieldLabel>Assign choices to:</FieldLabel>
      <ChoiceList>
        <button>Click here to add item</button>
      </ChoiceList>
      <SearchRow>
        <SearchBox>
          <TextCaret />
          <BareInput aria-label="Search choices" />
          <SearchIcon color="#d8d8d8" flip w={1.6} />
        </SearchBox>
        <ToolButton $width={64} $menu aria-label="Settings">
          <HammerIcon />
          <Down />
        </ToolButton>
        <ToolButton $width={100} aria-label="Edit"><PencilIcon /></ToolButton>
      </SearchRow>
      <NamePanel>
        <NameTable>
          <thead>
            <tr><th>Name</th></tr>
          </thead>
          <tbody>
            {choices.map((choice) => (
              <tr key={choice}><td>{choice}</td></tr>
            ))}
          </tbody>
        </NameTable>
      </NamePanel>
    </DialogBody>
    <DialogFooter>
      <CloseButton>Close</CloseButton>
    </DialogFooter>
  </Dialog>
);

const App = () => {
  return (
    <Screen>
      <GlobalStyle />
      <Desktop>
        <Window>
          <TitleBar>
            <QuickAccess>
              <Small icon={AppIcon} label="Application" />
              <Separator />
              <Small icon={NewIcon} label="New" />
              <Small icon={OpenIcon} label="Open" />
              <Small icon={SaveIcon} label="Save" />
              <Small icon={UndoIcon} label="Undo" />
              <IconButton $narrow aria-label="Undo list"><Down color="#bdbdbd" /></IconButton>
              <Small icon={RedoIcon} label="Redo" />
              <IconButton $narrow aria-label="Redo list"><Down color="#bdbdbd" /></IconButton>
              <Small icon={RegenIcon} label="Regenerate" />
              <Small icon={WindowsIcon} label="Windows" />
              <IconButton $narrow aria-label="Window list"><Down color="#777" /></IconButton>
              <Small icon={CloseFolderIcon} label="Close" />
              <Separator $color="#bbbbbb" />
              <IconButton $narrow aria-label="Customize"><MoreIcon /></IconButton>
            </QuickAccess>
            <WindowTitle>CONFIG_VICE (Active) - PTC Creo Parametric 3.0</WindowTitle>
            <WindowControls>
              <IconButton aria-label="Minimize">
                <Svg w={12}><path d="M1 7.500h10v3H1z" stroke="#b5b5b5" /></Svg>
              </IconButton>
              <IconButton aria-label="Restore">
                <Svg w={14} h={12}><path d="M.5.5h13v11H.5zM3.500 4.500h7v4h-7z" stroke="#b5b5b5" /></Svg>
              </IconButton>
              <IconButton aria-label="Close window">
                <Svg w={14} h={12}>
                  <path d="M.5.5h4L7 3.500 9.500.5h4L9 6l4.500 5.500h-4L7 8.500l-2.500 3h-4L5 6z" stroke="#b5b5b5" />
                </Svg>
              </IconButton>
            </WindowControls>
          </TitleBar>
          <TabRow>
            <FileTab>File <Down /></FileTab>
            {tabs.map((tab, i) => (
              <RibbonTab key={tab} $active={i === 0} $last={i === tabs.length - 1}>
                {tab}
              </RibbonTab>
            ))}
            <HelpTools>
              <CollapseIcon />
              <SearchIcon />
              <LearnIcon />
              <Down />
              <HelpIcon />
            </HelpTools>
          </TabRow>
          <RibbonPanel />
          <WorkArea>
            <ModelTree />
            <Viewport>
              <ViewToolbar>
                <ViewButton aria-label="Annotation display"><AnnotationIcon /></ViewButton>
                <ViewButton aria-label="Spin center"><SpinCenterIcon /></ViewButton>
              </ViewToolbar>
              <ModelPart width="20" height="114" aria-hidden="true">
                <path d="M0 0h11l5 9v25l2 1 2 38v22L0 96z" fill="#595959" />
                <path d="M0 98l11-4 9-4v16l-9 4-11 3z" fill="#232323" />
                <path d="M11 0l5 9h-5z" fill="#8a8a8a" />
              </ModelPart>
            </Viewport>
          </WorkArea>
          <StatusBar>
            <StatusToggle $pressed aria-label="Toggle navigator"><TreeIcon size={20} /></StatusToggle>
            <StatusToggle aria-label="Toggle browser"><GlobeIcon /></StatusToggle>
            <Separator $height={26} />
            <Message>Datum planes will not be displayed.</Message>
            <StatusCell $width={36} />
            <StatusCell $width={43}><DotsIcon /></StatusCell>
            <StatusCell $width={48}><FlagIcon /></StatusCell>
            <StatusCell $width={55}>
              <StatusButton aria-label="Find"><BinocularsIcon /></StatusButton>
            </StatusCell>
            <StatusCell $width={55}>
              <StatusButton aria-label="Selection box"><BoxIcon /></StatusButton>
            </StatusCell>
            <SelectWrap>
              <select aria-label="Selection filter" defaultValue="All">
                <option>All</option>
              </select>
              <span><Down /></span>
            </SelectWrap>
          </StatusBar>
          <AssignChoices />
          <Highlight />
          <Pointer width="16" height="26" aria-hidden="true">
            <path d="M2 2v18l4-4 3 7 3-1-3-7h6z" fill="#fff" stroke="#333" strokeWidth="1.300" />
          </Pointer>
        </Window>
      </Desktop>
      <Taskbar>
        <TaskSlot $wide />
        <TaskSlot />
        <TaskSlot />
        <TaskSlot />
        <TaskSlot />
        <TaskSlot />
        <TaskSlot />
        <TaskSlot />
        <TaskSlot />
      </Taskbar>
    </Screen>
  );
};

export default App;
